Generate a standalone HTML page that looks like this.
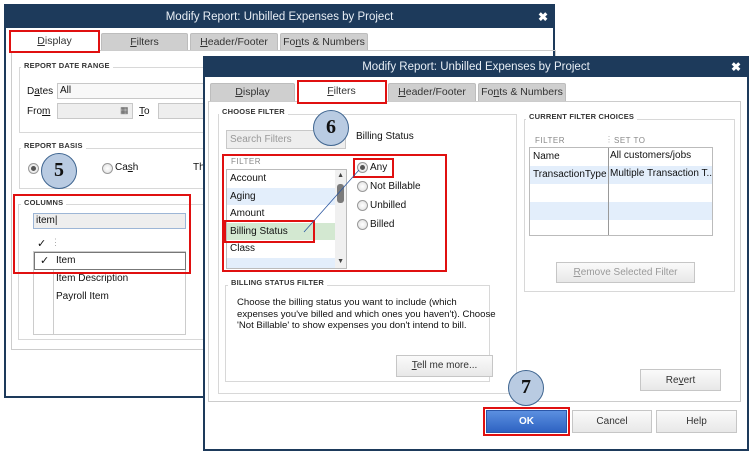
<!DOCTYPE html>
<html><head><style>
*{box-sizing:border-box;margin:0;padding:0}
body{width:755px;height:454px;background:#fff;position:relative;overflow:hidden;font-family:"Liberation Sans",Arial,sans-serif;font-size:10px;color:#111}
div,span{position:absolute;white-space:nowrap}
.win{background:#fff;border:2px solid #1d3a5b}
.tb{background:#1d3a5b;color:#e8eef5;font-size:11.5px;text-align:center;line-height:20px}
.tab{background:#cfcfcf;border:1px solid #bdbdbd;border-bottom:none;text-align:center;line-height:17px;font-size:10.5px;color:#333;border-radius:2px 2px 0 0}
.act{background:#fff}
.red{border:2px solid #e01010}
.grp{border:1px solid #d8d8d8}
.gl{background:#fff;font-size:7.5px;font-weight:bold;color:#333;padding:0 3px;letter-spacing:.2px}
.inp{background:#eee;border:1px solid #c8c8c8}
.rad{width:11px;height:11px;border-radius:50%;border:1px solid #999;background:radial-gradient(#fff,#ddd)}
.rad.on::after{content:"";position:absolute;left:2px;top:2px;width:5px;height:5px;border-radius:50%;background:#555}
.btn{background:linear-gradient(#fafafa,#e8e8e8);border:1px solid #c6c6c6;text-align:center;font-size:10px;color:#333}
.circ{width:36px;height:36px;border-radius:50%;background:#b9cbe2;border:1.5px solid #3f6590;text-align:center;line-height:33px;font-family:"Liberation Serif",serif;font-weight:bold;font-size:20px;color:#111}
.row{left:0;right:0;height:17.5px;line-height:17px;padding-left:3px}
.b{background:#e3eefb}
</style></head><body>

<!-- back window -->
<div class="win" style="left:4px;top:4px;width:551px;height:394px">
 <div class="tb" style="left:0;top:0;width:547px;height:22px;line-height:22px">Modify Report: Unbilled Expenses by Project</div>
 <span style="left:532px;top:4px;color:#fff;font-size:12px;font-weight:bold">✖</span>
</div>
<div style="left:11px;top:50px;width:545px;height:300px;border:1px solid #ccc"></div>
<div class="tab act" style="left:10px;top:31px;width:89px;height:21px;line-height:21px;border:none"><u>D</u>isplay</div>
<div class="red" style="left:9px;top:30px;width:91px;height:23px"></div>
<div class="tab" style="left:101px;top:33px;width:87px;height:17px"><u>F</u>ilters</div>
<div class="tab" style="left:190px;top:33px;width:88px;height:17px"><u>H</u>eader/Footer</div>
<div class="tab" style="left:280px;top:33px;width:88px;height:17px">Fo<u>n</u>ts &amp; Numbers</div>

<div class="grp" style="left:19px;top:67px;width:200px;height:66px"></div>
<span class="gl" style="left:21px;top:61px">REPORT DATE RANGE</span>
<span style="left:27px;top:86px">D<u>a</u>tes</span>
<div class="inp" style="left:57px;top:83px;width:150px;height:16px;background:#f8f8f8"><span style="left:2px;top:1px">All</span></div>
<span style="left:27px;top:106px">Fro<u>m</u></span>
<div class="inp" style="left:57px;top:103px;width:76px;height:16px"><span style="left:62px;top:1px;font-size:9px;color:#555">▦</span></div>
<span style="left:139px;top:106px"><u>T</u>o</span>
<div class="inp" style="left:158px;top:103px;width:50px;height:16px"></div>

<div class="grp" style="left:19px;top:148px;width:200px;height:41px"></div>
<span class="gl" style="left:21px;top:141px">REPORT BASIS</span>
<div class="rad on" style="left:28px;top:163px"></div>
<div class="rad" style="left:102px;top:163px"></div>
<span style="left:115px;top:162px">Ca<u>s</u>h</span>
<span style="left:193px;top:162px">Th</span>

<div class="grp" style="left:18px;top:204px;width:190px;height:136px"></div>
<span class="gl" style="left:21px;top:198px">COLUMNS</span>
<div class="inp" style="left:33px;top:213px;width:153px;height:16px;border-color:#9db6d6;background:#eee"><span style="left:2px;top:1px">item|</span></div>
<span style="left:37px;top:237px;font-size:11px">✓</span>
<span style="left:51px;top:237px;color:#aaa;font-size:9px">⋮</span>
<div style="left:33px;top:251px;width:153px;height:84px;border:1px solid #ccc;background:#fff"></div>
<div style="left:53px;top:251px;width:1px;height:84px;background:#ccc"></div>
<div style="left:34px;top:252px;width:152px;height:18px;border:1px solid #777;background:#fff"></div>
<span style="left:40px;top:254px;font-size:11px">✓</span>
<span style="left:56px;top:255px">Item</span>
<span style="left:56px;top:273px">Item Description</span>
<span style="left:56px;top:291px">Payroll Item</span>
<div class="red" style="left:13px;top:194px;width:178px;height:80px"></div>
<div class="circ" style="left:41px;top:153px">5</div>

<!-- front window -->
<div class="win" style="left:203px;top:56px;width:546px;height:395px"></div>
<div class="tb" style="left:205px;top:57px;width:542px;height:20px">Modify Report: Unbilled Expenses by Project</div>
<span style="left:731px;top:60px;color:#fff;font-size:12px;font-weight:bold">✖</span>
<div style="left:208px;top:101px;width:533px;height:301px;border:1px solid #ccc"></div>
<div class="tab" style="left:210px;top:83px;width:85px;height:18px;line-height:17px"><u>D</u>isplay</div>
<div class="tab act" style="left:297px;top:81px;width:89px;height:22px;line-height:20px;border:none"><u>F</u>ilters</div>
<div class="red" style="left:297px;top:80px;width:90px;height:24px"></div>
<div class="tab" style="left:388px;top:83px;width:88px;height:18px;line-height:17px"><u>H</u>eader/Footer</div>
<div class="tab" style="left:478px;top:83px;width:88px;height:18px;line-height:17px">Fo<u>n</u>ts &amp; Numbers</div>

<div class="grp" style="left:218px;top:114px;width:299px;height:280px"></div>
<span class="gl" style="left:219px;top:107px">CHOOSE FILTER</span>
<div class="inp" style="left:226px;top:130px;width:120px;height:19px"><span style="left:3px;top:3px;color:#999">Search Filters</span></div>
<span style="left:356px;top:131px">Billing Status</span>
<span style="left:231px;top:157px;font-size:8px;color:#888;letter-spacing:.5px">FILTER</span>
<div style="left:226px;top:169px;width:121px;height:100px;border:1px solid #bbb;background:#fff;overflow:hidden">
 <div class="row" style="top:0">Account</div>
 <div class="row b" style="top:17.5px">Aging</div>
 <div class="row" style="top:35px">Amount</div>
 <div class="row" style="top:52.5px;background:#d3e8d1">Billing Status</div>
 <div class="row" style="top:70px">Class</div>
 <div class="row b" style="top:87.5px"></div>
 <div style="right:0;top:0;width:11px;height:100px;background:#f0f0f0"></div>
 <span style="right:2px;top:2px;font-size:7px;color:#444">▲</span>
 <div style="right:2px;top:14px;width:7px;height:19px;border-radius:3px;background:#7a7a7a"></div>
 <span style="right:2px;top:88px;font-size:7px;color:#444">▼</span>
</div>
<div class="red" style="left:224px;top:220px;width:91px;height:23px"></div>
<div class="rad on" style="left:357px;top:162px"></div><span style="left:370px;top:162px">Any</span>
<div class="rad" style="left:357px;top:181px"></div><span style="left:370px;top:181px">Not Billable</span>
<div class="rad" style="left:357px;top:200px"></div><span style="left:370px;top:200px">Unbilled</span>
<div class="rad" style="left:357px;top:219px"></div><span style="left:370px;top:219px">Billed</span>
<div class="red" style="left:353px;top:158px;width:41px;height:20px"></div>
<div class="red" style="left:222px;top:154px;width:225px;height:118px"></div>
<svg style="position:absolute;left:0;top:0" width="755" height="454"><line x1="304" y1="232" x2="359" y2="170" stroke="#2b57a0" stroke-width="0.8"/></svg>
<div class="circ" style="left:313px;top:110px">6</div>

<div class="grp" style="left:225px;top:285px;width:265px;height:97px"></div>
<span class="gl" style="left:228px;top:278px">BILLING STATUS FILTER</span>
<span style="left:237px;top:297px;line-height:11.5px;font-size:9.6px">Choose the billing status you want to include (which<br>expenses you've billed and which ones you haven't). Choose<br>'Not Billable' to show expenses you don't intend to bill.</span>
<div class="btn" style="left:396px;top:355px;width:97px;height:22px;line-height:20px"><u>T</u>ell me more...</div>

<div class="grp" style="left:524px;top:119px;width:211px;height:173px"></div>
<span class="gl" style="left:526px;top:112px">CURRENT FILTER CHOICES</span>
<span style="left:535px;top:136px;font-size:8px;color:#888;letter-spacing:.5px">FILTER</span>
<span style="left:605px;top:135px;font-size:8px;color:#aaa">⋮</span>
<span style="left:614px;top:136px;font-size:8px;color:#888;letter-spacing:.5px">SET TO</span>
<div style="left:529px;top:147px;width:184px;height:89px;border:1px solid #bbb;background:#fff;overflow:hidden">
 <div class="row" style="top:0">Name</div>
 <div class="row b" style="top:18px">TransactionType</div>
 <div class="row" style="top:36px"></div>
 <div class="row b" style="top:54px"></div>
 <span style="left:80px;top:2px">All customers/jobs</span>
 <span style="left:80px;top:20px;background:#e3eefb">Multiple Transaction T...</span>
 <div style="left:78px;top:0;width:1px;height:89px;background:#999"></div>
</div>
<div class="btn" style="left:556px;top:262px;width:139px;height:21px;line-height:20px;color:#999"><u>R</u>emove Selected Filter</div>
<div class="btn" style="left:640px;top:369px;width:81px;height:22px;line-height:21px">Re<u>v</u>ert</div>

<div class="btn" style="left:486px;top:410px;width:81px;height:23px;line-height:22px;background:linear-gradient(#5b8fe0,#2e63c2);border-color:#2a56a8;color:#fff;font-weight:bold">OK</div>
<div class="red" style="left:483px;top:407px;width:87px;height:29px"></div>
<div class="btn" style="left:572px;top:410px;width:80px;height:23px;line-height:22px">Cancel</div>
<div class="btn" style="left:656px;top:410px;width:81px;height:23px;line-height:22px">Help</div>
<div class="circ" style="left:508px;top:370px">7</div>
</body></html>
